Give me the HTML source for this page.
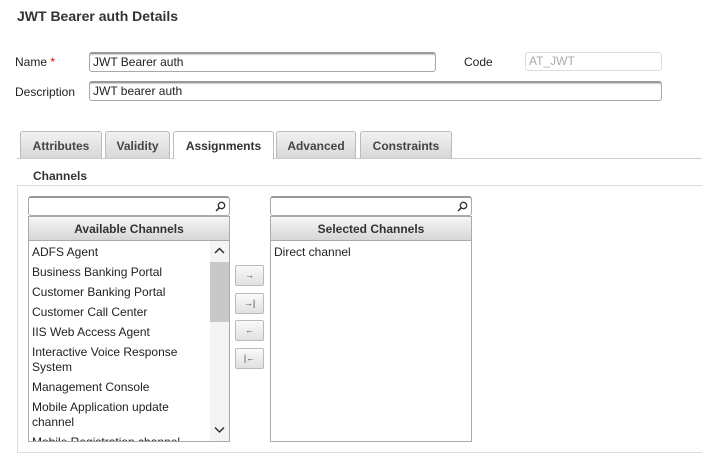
<!DOCTYPE html>
<html><head><meta charset="utf-8"><style>
*{box-sizing:border-box;margin:0;padding:0}
body{width:702px;height:467px;background:#fff;font-family:"Liberation Sans",Arial,sans-serif;font-size:12px;color:#222;position:relative;overflow:hidden}
.a{position:absolute}
.inp{position:absolute;border:1px solid #aaa;border-top:2px solid #999;border-radius:3px;background:#fff;padding:1px 3px;font-size:12px;line-height:15px;box-shadow:inset 0 1px 1px #ccc}
.tab{position:absolute;top:131px;height:27px;border:1px solid #bbb;border-bottom:none;border-radius:3px 3px 0 0;background:linear-gradient(#f2f2f2,#d8d8d8);font-weight:bold;color:#444;text-align:center;line-height:29px;font-size:12px}
.tab.act{background:#fff;color:#333;height:28px;z-index:2}
.srch{position:absolute;height:20px;border:1px solid #aaa;border-top:2px solid #999;border-radius:3px;background:#fff}
.hdr{position:absolute;height:25px;border:1px solid #aaa;background:linear-gradient(#f6f6f6,#d6d6d6);font-weight:bold;color:#333;text-align:center;line-height:24px;font-size:12px}
.list{position:absolute;border:1px solid #aaa;border-top:none;background:#fff;overflow:hidden}
.it{padding-left:3px;line-height:15px;font-size:12px;color:#222}
.btn{position:absolute;left:235px;width:29px;height:21px;border:1px solid #bbb;border-radius:2px;background:linear-gradient(#fafafa,#e0e0e0);font-size:9px;color:#444;text-align:center;line-height:19px}
</style></head><body>
<div class="a" style="left:17px;top:8px;font-size:14px;font-weight:bold;color:#333">JWT Bearer auth Details</div>
<div class="a" style="left:15px;top:55px">Name<span style="color:#d00">&nbsp;*</span></div>
<div class="inp" style="left:89px;top:52px;width:347px;height:20px">JWT Bearer auth</div>
<div class="a" style="left:464px;top:55px">Code</div>
<div class="inp" style="left:525px;top:52px;width:137px;height:19px;border:1px solid #ddd;box-shadow:none;color:#aaa">AT_JWT</div>
<div class="a" style="left:15px;top:85px">Description</div>
<div class="inp" style="left:89px;top:81px;width:573px;height:20px">JWT bearer auth</div>

<div class="a" style="left:17px;top:158px;width:685px;height:1px;background:#ccc"></div>
<div class="tab" style="left:20px;width:82px">Attributes</div>
<div class="tab" style="left:105px;width:65px">Validity</div>
<div class="tab act" style="left:173px;width:101px">Assignments</div>
<div class="tab" style="left:276px;width:80px">Advanced</div>
<div class="tab" style="left:360px;width:92px">Constraints</div>

<div class="a" style="left:33px;top:169px;font-weight:bold;color:#333">Channels</div>
<div class="a" style="left:17px;top:185px;width:685px;height:1px;background:#ddd"></div>
<div class="a" style="left:17px;top:185px;width:1px;height:268px;background:#ddd"></div>
<div class="a" style="left:17px;top:452px;width:685px;height:1px;background:#ddd"></div>

<div class="srch" style="left:28px;top:196px;width:202px"><svg class="a" style="right:3px;top:3px" width="11" height="11" viewBox="0 0 11 11"><circle cx="6.5" cy="4.5" r="3.2" fill="none" stroke="#333" stroke-width="1.3"/><path d="M4.2 6.8L1 10" stroke="#333" stroke-width="1.5"/></svg></div>
<div class="hdr" style="left:28px;top:216px;width:202px">Available Channels</div>
<div class="list" style="left:28px;top:241px;width:202px;height:201px">
<div style="padding-top:4px;width:181px">
<div class="it" style="margin-bottom:5px">ADFS Agent</div>
<div class="it" style="margin-bottom:5px">Business Banking Portal</div>
<div class="it" style="margin-bottom:5px">Customer Banking Portal</div>
<div class="it" style="margin-bottom:5px">Customer Call Center</div>
<div class="it" style="margin-bottom:5px">IIS Web Access Agent</div>
<div class="it" style="margin-bottom:5px">Interactive Voice Response System</div>
<div class="it" style="margin-bottom:5px">Management Console</div>
<div class="it" style="margin-bottom:5px">Mobile Application update channel</div>
<div class="it">Mobile Registration channel</div>
</div>
<div class="a" style="left:181px;top:0;width:19px;height:200px;background:#f4f4f4"></div>
<div class="a" style="left:181px;top:21px;width:19px;height:60px;background:#c8c8c8"></div>
<svg class="a" style="left:185px;top:6px" width="11" height="8"><path d="M1 6L5.5 1.5L10 6" fill="none" stroke="#333" stroke-width="1.5"/></svg>
<svg class="a" style="left:185px;top:185px" width="11" height="8"><path d="M1 1.5L5.5 6L10 1.5" fill="none" stroke="#333" stroke-width="1.5"/></svg>
</div>

<div class="btn" style="top:265px">→</div>
<div class="btn" style="top:293px">→|</div>
<div class="btn" style="top:320px">←</div>
<div class="btn" style="top:348px">|←</div>

<div class="srch" style="left:270px;top:196px;width:202px"><svg class="a" style="right:3px;top:3px" width="11" height="11" viewBox="0 0 11 11"><circle cx="6.5" cy="4.5" r="3.2" fill="none" stroke="#333" stroke-width="1.3"/><path d="M4.2 6.8L1 10" stroke="#333" stroke-width="1.5"/></svg></div>
<div class="hdr" style="left:270px;top:216px;width:202px">Selected Channels</div>
<div class="list" style="left:270px;top:241px;width:202px;height:201px"><div class="it" style="padding-top:4px">Direct channel</div></div>
</body></html>
